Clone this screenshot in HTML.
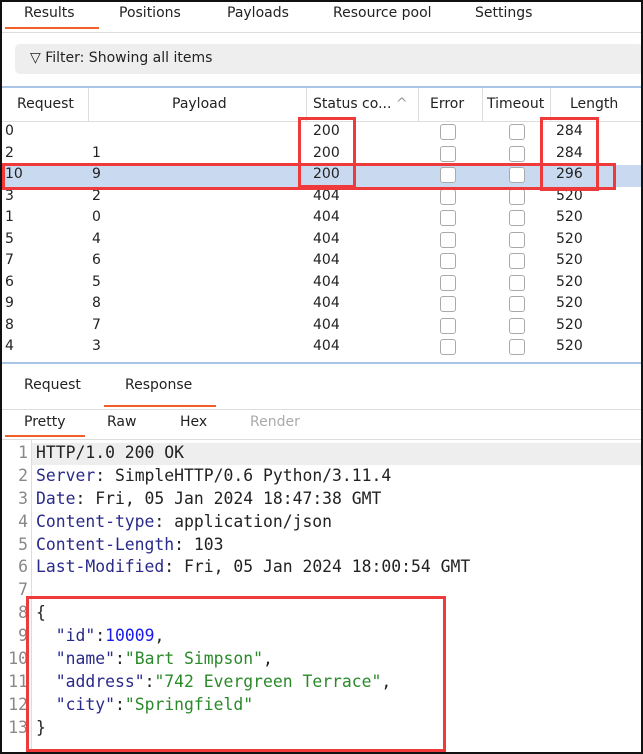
<!DOCTYPE html><html><head><style>
*{margin:0;padding:0;box-sizing:border-box}
body{width:643px;height:754px;overflow:hidden;background:#fff;font-family:"DejaVu Sans","Liberation Sans",sans-serif;font-size:14px;color:#222;position:relative}
.a{position:absolute;white-space:nowrap}
.red{position:absolute;border:3px solid #ee3a3a}
.m{font-family:"DejaVu Sans Mono","Liberation Mono",monospace;font-size:16.4px}
.k{color:#2a2a8a}.g{color:#2a8a2a}.b{color:#1a1aee}
.cb{position:absolute;width:16px;height:16px;border:1px solid #aaa;border-radius:3px;background:#fff}
.ln{position:absolute;left:0;width:28px;text-align:right;color:#888}
.c{position:absolute;left:36px;white-space:pre}
</style></head><body>
<div class="a" style="left:0;top:0;width:643px;height:754px;border:2px solid #111;z-index:9"></div>
<div class="a" style="left:24px;top:5px">Results</div>
<div class="a" style="left:119px;top:5px">Positions</div>
<div class="a" style="left:227px;top:5px">Payloads</div>
<div class="a" style="left:333px;top:5px">Resource pool</div>
<div class="a" style="left:475px;top:5px">Settings</div>
<div class="a" style="left:5px;top:27px;width:94px;height:2px;background:#f0602a"></div>
<div class="a" style="left:2px;top:32px;width:641px;height:1px;background:#ddd"></div>
<div class="a" style="left:15px;top:44px;width:628px;height:30px;background:#eeeeee;border-radius:5px"></div>
<div class="a" style="left:30px;top:50px">▽ Filter: Showing all items</div>
<div class="a" style="left:2px;top:86px;width:641px;height:2px;background:#a9c4e4"></div>
<div class="a" style="left:2px;top:88px;width:641px;height:34px;border-bottom:1px solid #ddd"></div>
<div class="a" style="left:88px;top:88px;width:1px;height:34px;background:#ddd"></div>
<div class="a" style="left:306px;top:88px;width:1px;height:34px;background:#ddd"></div>
<div class="a" style="left:418px;top:88px;width:1px;height:34px;background:#ddd"></div>
<div class="a" style="left:482px;top:88px;width:1px;height:34px;background:#ddd"></div>
<div class="a" style="left:550px;top:88px;width:1px;height:34px;background:#ddd"></div>
<div class="a" style="left:17px;top:96px">Request</div>
<div class="a" style="left:172px;top:96px">Payload</div>
<div class="a" style="left:313px;top:96px">Status co... <span style="color:#999">^</span></div>
<div class="a" style="left:430px;top:96px">Error</div>
<div class="a" style="left:487px;top:96px">Timeout</div>
<div class="a" style="left:570px;top:96px">Length</div>
<div class="a" style="left:2px;top:165px;width:641px;height:22px;background:#c9d9ef"></div>
<div id="rows"></div>
<script>
var r=[["0","","200","284"],["2","1","200","284"],["10","9","200","296"],["3","2","404","520"],["1","0","404","520"],["5","4","404","520"],["7","6","404","520"],["6","5","404","520"],["9","8","404","520"],["8","7","404","520"],["4","3","404","520"]],h="";
r.forEach(function(x,i){var t=123+i*21.5;h+='<div class="a" style="left:5px;top:'+t+'px">'+x[0]+'</div><div class="a" style="left:92px;top:'+t+'px">'+x[1]+'</div><div class="a" style="left:313px;top:'+t+'px">'+x[2]+'</div><div class="a" style="left:556px;top:'+t+'px">'+x[3]+'</div><div class="cb" style="left:440px;top:'+(t+1)+'px"></div><div class="cb" style="left:509px;top:'+(t+1)+'px"></div>';});
document.getElementById('rows').innerHTML=h;
</script>
<div class="red" style="left:298px;top:117px;width:58px;height:71px"></div>
<div class="red" style="left:540px;top:117px;width:59px;height:74px"></div>
<div class="red" style="left:2px;top:163px;width:614px;height:27px"></div>
<div class="a" style="left:2px;top:362px;width:641px;height:2px;background:#a9c4e4"></div>
<div class="a" style="left:24px;top:377px">Request</div>
<div class="a" style="left:125px;top:377px">Response</div>
<div class="a" style="left:104px;top:405px;width:112px;height:2px;background:#f0602a"></div>
<div class="a" style="left:2px;top:409px;width:641px;height:1px;background:#ddd"></div>
<div class="a" style="left:24px;top:414px">Pretty</div>
<div class="a" style="left:107px;top:414px">Raw</div>
<div class="a" style="left:180px;top:414px">Hex</div>
<div class="a" style="left:250px;top:414px;color:#aaa">Render</div>
<div class="a" style="left:5px;top:435px;width:80px;height:2px;background:#f0602a"></div>
<div class="a" style="left:2px;top:439px;width:641px;height:1px;background:#ddd"></div>
<div class="a" style="left:32px;top:443px;width:611px;height:22px;background:#eeeeee"></div>
<div class="a" style="left:31px;top:440px;width:1px;height:314px;background:#ddd"></div>
<div class="a m" style="left:0;top:442px;line-height:22.9px">
<div style="position:relative;height:22.9px"><span class="ln">1</span><span class="c">HTTP/1.0 200 OK</span></div>
<div style="position:relative;height:22.9px"><span class="ln">2</span><span class="c"><span class="k">Server</span>: SimpleHTTP/0.6 Python/3.11.4</span></div>
<div style="position:relative;height:22.9px"><span class="ln">3</span><span class="c"><span class="k">Date</span>: Fri, 05 Jan 2024 18:47:38 GMT</span></div>
<div style="position:relative;height:22.9px"><span class="ln">4</span><span class="c"><span class="k">Content-type</span>: application/json</span></div>
<div style="position:relative;height:22.9px"><span class="ln">5</span><span class="c"><span class="k">Content-Length</span>: 103</span></div>
<div style="position:relative;height:22.9px"><span class="ln">6</span><span class="c"><span class="k">Last-Modified</span>: Fri, 05 Jan 2024 18:00:54 GMT</span></div>
<div style="position:relative;height:22.9px"><span class="ln">7</span></div>
<div style="position:relative;height:22.9px"><span class="ln">8</span><span class="c">{</span></div>
<div style="position:relative;height:22.9px"><span class="ln">9</span><span class="c">  <span class="k">"id"</span>:<span class="b">10009</span>,</span></div>
<div style="position:relative;height:22.9px"><span class="ln">10</span><span class="c">  <span class="k">"name"</span>:<span class="g">"Bart Simpson"</span>,</span></div>
<div style="position:relative;height:22.9px"><span class="ln">11</span><span class="c">  <span class="k">"address"</span>:<span class="g">"742 Evergreen Terrace"</span>,</span></div>
<div style="position:relative;height:22.9px"><span class="ln">12</span><span class="c">  <span class="k">"city"</span>:<span class="g">"Springfield"</span></span></div>
<div style="position:relative;height:22.9px"><span class="ln">13</span><span class="c">}</span></div>
</div>
<div class="red" style="left:26px;top:596px;width:420px;height:156px"></div>
</body></html>
